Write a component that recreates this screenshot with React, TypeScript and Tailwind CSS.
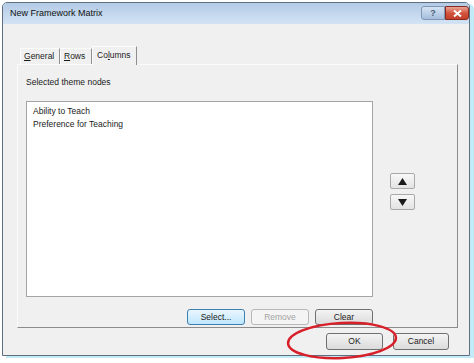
import React from 'react';

const font = "font-['Liberation_Sans',Arial,sans-serif]";

function Btn({ label, w, h, focused, disabled }: { label: string; w: string; h: string; focused?: boolean; disabled?: boolean }) {
  let cls = 'border-[#707070] bg-gradient-to-b from-[#f3f3f3] to-[#dcdcdc] text-[#1b1b1b]';
  if (focused) cls = 'border-[#3c7fb1] bg-gradient-to-b from-[#eaf6fd] to-[#bee6fd] text-[#1b1b1b]';
  if (disabled) cls = 'border-[#b5b9bc] bg-[#f4f4f4] text-[#a3a3a3]';
  return (
    <div className={`${w} ${h} rounded-[3px] border flex items-center justify-center leading-none ${cls}`}>
      {label}
    </div>
  );
}

function ArrowBtn({ up }: { up?: boolean }) {
  return (
    <div className="w-[25px] h-[16px] rounded-[2px] border border-[#a9a9a9] bg-gradient-to-b from-[#f8f8f8] to-[#e3e3e3] flex items-center justify-center">
      <svg width="9" height="7" viewBox="0 0 9 7">
        {up ? <polygon points="4.5,0 9,7 0,7" fill="#1a1a1a" /> : <polygon points="0,0 9,0 4.5,7" fill="#1a1a1a" />}
      </svg>
    </div>
  );
}

export default function App() {
  return (
    <div className={`relative w-[474px] h-[363px] bg-white overflow-hidden text-[8.5px] text-[#1b1b1b] ${font}`}>
      <div className="ml-[2px] mt-[2px] w-[468px] h-[354px] border border-[#5f6f80] rounded-t-[5px] shadow-[4px_2px_0_0_#c2ebf7] flex flex-col overflow-hidden">
        {/* title bar */}
        <div className="h-[21px] flex items-start bg-gradient-to-b from-[#b3cbe6] to-[#d3e3f4]">
          <div className="pl-[7px] pt-[4px] text-[9px] leading-[12px] text-[#111]">New Framework Matrix</div>
          <div className="ml-auto flex pt-[3px]">
            <div className="w-[24px] h-[14px] rounded-l-[3px] border border-[#8097b2] bg-gradient-to-b from-[#d6e3f3] to-[#a4bedc] flex items-center justify-center text-[9px] font-bold text-[#4d5f78] leading-none">
              ?
            </div>
            <div className="w-[24px] h-[14px] rounded-r-[3px] border border-[#8a2a1f] bg-gradient-to-b from-[#e9a597] via-[#d2543c] to-[#c33f2a] flex items-center justify-center">
              <svg width="9" height="7" viewBox="0 0 9 7">
                <path d="M1 0.5 L8 6.5 M8 0.5 L1 6.5" stroke="#fff" strokeWidth="2" />
              </svg>
            </div>
          </div>
        </div>

        {/* client */}
        <div className="flex-1 bg-[#f0f0f0] pt-[22px] pl-[14px] flex flex-col">
          {/* tabs */}
          <div className="flex items-end h-[18px] pl-[3px]">
            <div className="w-[40px] h-[16px] border-l border-t border-[#fbfbfb] border-r-[#8e8f8f] border-r flex items-center pl-[3px]">
              <span><u>G</u>eneral</span>
            </div>
            <div className="w-[32px] h-[16px] border-l border-t border-[#fbfbfb] border-r-[#8e8f8f] border-r flex items-center pl-[3px]">
              <span><u>R</u>ows</span>
            </div>
            <div className="relative z-10 -mb-px w-[45px] h-[19px] bg-[#f0f0f0] border-l border-t border-[#fbfbfb] border-r-[#8e8f8f] border-r flex items-center pl-[4px] pb-[2px]">
              <span>Co<u>l</u>umns</span>
            </div>
          </div>

          {/* tab panel */}
          <div className="w-[441px] h-[264px] border-l border-t border-[#fbfbfb] border-r border-b border-r-[#8b8b8b] border-b-[#8b8b8b] pt-[12px] pl-[8px]">
            <div className="leading-[10px] mb-[14px]">Selected theme nodes</div>
            <div className="flex items-start">
              <div className="w-[347px] h-[196px] border border-[#a5a5a5] bg-white pt-[3px] pl-[6px] leading-[13px]">
                <div>Ability to Teach</div>
                <div>Preference for Teaching</div>
              </div>
              <div className="ml-[17px] mt-[72px] flex flex-col gap-[5px]">
                <ArrowBtn up />
                <ArrowBtn />
              </div>
            </div>
            <div className="w-[347px] mt-[12px] flex justify-end gap-[6px]">
              <Btn label="Select..." w="w-[58px]" h="h-[16px]" focused />
              <Btn label="Remove" w="w-[58px]" h="h-[16px]" disabled />
              <Btn label="Clear" w="w-[58px]" h="h-[16px]" />
            </div>
          </div>

          {/* dialog buttons */}
          <div className="mt-[5px] flex justify-end gap-[10px] pr-[20px]">
            <Btn label="OK" w="w-[57px]" h="h-[17px]" />
            <Btn label="Cancel" w="w-[56px]" h="h-[17px]" />
          </div>
        </div>
      </div>

      {/* red highlight */}
      <svg className="absolute left-0 top-0 pointer-events-none" width="474" height="363">
        <ellipse cx="342" cy="340.5" rx="54" ry="17.5" fill="none" stroke="#d8202a" strokeWidth="2.5" transform="rotate(-3 342 340.5)" />
      </svg>
    </div>
  );
}
